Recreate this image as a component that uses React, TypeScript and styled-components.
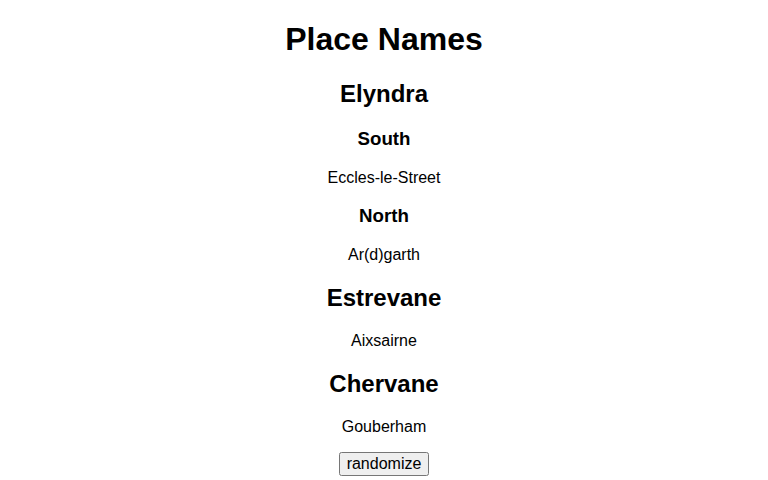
import React, { useState } from "react";
import styled, { createGlobalStyle } from "styled-components";

const Global = createGlobalStyle`
  body {
    margin: 0;
    font-family: "Liberation Sans", Arial, sans-serif;
    color: #000;
    background: #fff;
  }
`;

const Page = styled.main`
  display: flow-root;
  padding: 0 8px;
  text-align: center;
`;

const Title = styled.h1`
  font-size: 32px;
  margin: 21.44px 0;
`;

const Region = styled.h2`
  font-size: 24px;
  margin: 19.92px 0;
`;

const Direction = styled.h3`
  font-size: 18.72px;
  margin: 18.72px 0;
`;

const Name = styled.p`
  font-size: 16px;
  margin: 16px 0;
`;

const Controls = styled.div`
  display: flex;
  justify-content: center;
`;

const Button = styled.button`
  font-family: "Liberation Sans", Arial, sans-serif;
  font-size: 16px;
  padding: 1px 6px;
  height: 24px;
  line-height: normal;
`;

export default function App() {
  const [, setTick] = useState(0);
  return (
    <Page>
      <Global />
      <Title>Place Names</Title>
      <Region>Elyndra</Region>
      <Direction>South</Direction>
      <Name>Eccles-le-Street</Name>
      <Direction>North</Direction>
      <Name>Ar(d)garth</Name>
      <Region>Estrevane</Region>
      <Name>Aixsairne</Name>
      <Region>Chervane</Region>
      <Name>Gouberham</Name>
      <Controls>
        <Button onClick={() => setTick((t) => t + 1)}>randomize</Button>
      </Controls>
    </Page>
  );
}
